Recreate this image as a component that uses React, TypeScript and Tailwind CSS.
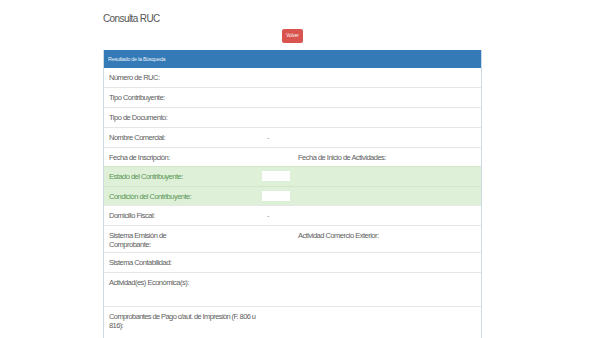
import type { ReactNode } from 'react';

type RowProps = {
  label: ReactNode;
  value?: ReactNode;
  label2?: ReactNode;
  height: string;
  success?: boolean;
};

function Row({ label, value, label2, height, success }: RowProps) {
  return (
    <div
      className={`grid grid-cols-[153px_36px_1fr] border-t ${height} ${
        success ? 'border-[#d3e7cb] bg-[#dff0d8] text-[#5a9657]' : 'border-[#e6e6e6] text-[#5e5e5e]'
      }`}
    >
      <div className="whitespace-nowrap pl-[5px] pt-[5px]">{label}</div>
      <div className="pl-[5px] pt-[5px]">{value}</div>
      <div className="whitespace-nowrap pl-[5px] pt-[5px]">{label2}</div>
    </div>
  );
}

const blank = <div className="-mt-[1px] h-[10px] w-[28px] bg-white" />;
const dash = <span className="ml-[5px] text-[#9a9a9a]">-</span>;

export default function App() {
  return (
    <div className="h-[338px] w-[600px] overflow-hidden bg-white font-['Liberation_Sans',Arial,sans-serif]">
      <div className="pl-[103px]">
        <h1 className="pt-[13px] text-[10px] leading-[12px] tracking-[-0.6px] text-[#555]">Consulta RUC</h1>
        <div className="flex w-[379px] justify-center pt-[4px]">
          <button className="h-[14px] w-[21px] rounded-[2px] bg-[#d9534f] text-[4.5px] leading-[14px] text-white">
            Volver
          </button>
        </div>
        <div className="mt-[7px] w-[379px] border-x border-[#ccd9e6]">
          <div className="h-[18px] bg-[#337ab7] pl-[4px] text-[5.5px] leading-[18px] tracking-[-0.3px] text-[#e8f0f8]">
            Resultado de la Búsqueda
          </div>
          <div className="text-[7.5px] leading-[9px] tracking-[-0.5px]">
            <div className="grid h-[19px] grid-cols-[153px_36px_1fr] text-[#5e5e5e]">
              <div className="pl-[5px] pt-[5px]">Número de RUC:</div>
            </div>
            <Row height="h-[20px]" label="Tipo Contribuyente:" />
            <Row height="h-[20px]" label="Tipo de Documento:" />
            <Row height="h-[20px]" label="Nombre Comercial:" value={dash} />
            <Row height="h-[19px]" label="Fecha de Inscripción:" label2="Fecha de Inicio de Actividades:" />
            <Row height="h-[20px]" success label="Estado del Contribuyente:" value={blank} />
            <Row height="h-[19px]" success label="Condición del Contribuyente:" value={blank} />
            <Row height="h-[20px]" label="Domicilio Fiscal:" value={dash} />
            <Row
              height="h-[27px]"
              label={
                <>
                  Sistema Emisión de
                  <br />
                  Comprobante:
                </>
              }
              label2="Actividad Comercio Exterior:"
            />
            <Row height="h-[20px]" label="Sistema Contabilidad:" />
            <Row height="h-[34px]" label="Actividad(es) Económica(s):" />
            <Row
              height="h-[40px]"
              label={
                <span className="tracking-[-0.6px]">
                  Comprobantes de Pago c/aut. de Impresión (F. 806 u
                  <br />
                  816):
                </span>
              }
            />
          </div>
        </div>
      </div>
    </div>
  );
}
